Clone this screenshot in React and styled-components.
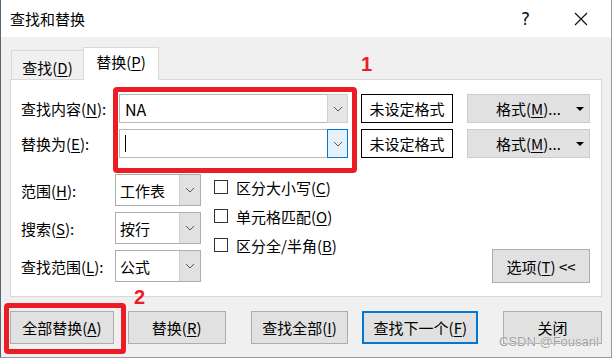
import React from "react";
import styled, { createGlobalStyle } from "styled-components";

const Global = createGlobalStyle`
  html, body { margin: 0; padding: 0; background: #f0f0f0; }
  * { box-sizing: border-box; }
`;

const font = `"Noto Sans CJK SC", "Noto Sans", sans-serif`;

const Chevron = () => (
  <svg width="10" height="6" viewBox="0 0 10 6">
    <path d="M1 1 L5 5 L9 1" fill="none" stroke="#555" strokeWidth="1" />
  </svg>
);

const Key = ({ children }) => <u>{children}</u>;

const App = () => {
  return (
    <Window>
      <Global />
      <TitleBar>
        <span>查找和替换</span>
        <TitleIcons>
          <Help>?</Help>
          <svg width="14" height="14" viewBox="0 0 14 14">
            <path d="M1 1 L13 13 M13 1 L1 13" stroke="#111" strokeWidth="1.2" />
          </svg>
        </TitleIcons>
      </TitleBar>

      <Body>
        <Tabs>
          <Tab>查找(<Key>D</Key>)</Tab>
          <Tab $active>替换(<Key>P</Key>)</Tab>
        </Tabs>

        <Panel>
          <FieldRow>
            <Label>查找内容(<Key>N</Key>):</Label>
            <Combo>
              <ComboText>NA</ComboText>
              <ComboArrow><Chevron /></ComboArrow>
            </Combo>
            <FormatState>未设定格式</FormatState>
            <FormatButton>
              <span>格式(<Key>M</Key>)...</span>
              <Caret />
            </FormatButton>
          </FieldRow>
          <FieldRow>
            <Label>替换为(<Key>E</Key>):</Label>
            <Combo>
              <ComboText><Cursor /></ComboText>
              <ComboArrow $focus><Chevron /></ComboArrow>
            </Combo>
            <FormatState>未设定格式</FormatState>
            <FormatButton>
              <span>格式(<Key>M</Key>)...</span>
              <Caret />
            </FormatButton>
          </FieldRow>

          <Options>
            <SelectCol>
              <SelectRow>
                <OptLabel>范围(<Key>H</Key>):</OptLabel>
                <Select>
                  <SelectText>工作表</SelectText>
                  <SelectArrow><Chevron /></SelectArrow>
                </Select>
              </SelectRow>
              <SelectRow>
                <OptLabel>搜索(<Key>S</Key>):</OptLabel>
                <Select>
                  <SelectText>按行</SelectText>
                  <SelectArrow><Chevron /></SelectArrow>
                </Select>
              </SelectRow>
              <SelectRow>
                <OptLabel>查找范围(<Key>L</Key>):</OptLabel>
                <Select>
                  <SelectText>公式</SelectText>
                  <SelectArrow><Chevron /></SelectArrow>
                </Select>
              </SelectRow>
            </SelectCol>
            <CheckCol>
              <Check><Box /><span>区分大小写(<Key>C</Key>)</span></Check>
              <Check><Box /><span>单元格匹配(<Key>O</Key>)</span></Check>
              <Check><Box /><span>区分全/半角(<Key>B</Key>)</span></Check>
            </CheckCol>
            <OptionsButton>选项(<Key>T</Key>) &lt;&lt;</OptionsButton>
          </Options>
        </Panel>

        <ButtonRow>
          <Button $w={104}>全部替换(<Key>A</Key>)</Button>
          <Button $w={98}>替换(<Key>R</Key>)</Button>
          <Button $w={98} $gap={25}>查找全部(<Key>I</Key>)</Button>
          <Button $w={116} $primary>查找下一个(<Key>F</Key>)</Button>
          <Button $w={99} $gap={25}>关闭</Button>
        </ButtonRow>
      </Body>

      <RedBox $x={112} $y={87} $w={244} $h={86} />
      <RedBox $x={3} $y={303} $w={122} $h={51} />
      <Mark $x={360} $y={53}>1</Mark>
      <Mark $x={133} $y={286}>2</Mark>
      <Watermark>CSDN @Fousaril</Watermark>
    </Window>
  );
};

export default App;

const Window = styled.div`
  position: relative;
  width: 612px;
  height: 358px;
  display: flex;
  flex-direction: column;
  font-family: ${font};
  font-size: 15px;
  color: #000;
  background: #f0f0f0;
  border-left: 1px solid #5b6670;
  border-right: 1px solid #9a9a9a;
  border-bottom: 1px solid #9a9a9a;
  overflow: hidden;
  u { text-decoration-thickness: 1px; text-underline-offset: 2px; }
`;

const TitleBar = styled.div`
  height: 37px;
  background: #fff;
  display: flex;
  align-items: center;
  justify-content: space-between;
  padding-left: 9px;
  padding-right: 23px;
  font-size: 15px;
`;

const TitleIcons = styled.div`
  display: flex;
  align-items: center;
  gap: 44px;
`;

const Help = styled.span`
  font-family: "DejaVu Sans", sans-serif;
  font-size: 17px;
  color: #111;
`;

const Body = styled.div`
  flex: 1;
  padding: 11px 9px 0 9px;
  display: flex;
  flex-direction: column;
`;

const Tabs = styled.div`
  display: flex;
  align-items: flex-end;
  height: 32px;
  padding-left: 1px;
  position: relative;
  z-index: 1;
  margin-bottom: -1px;
`;

const Tab = styled.div`
  height: ${(p) => (p.$active ? "33px" : "30px")};
  width: ${(p) => (p.$active ? "76px" : "73px")};
  padding-top: ${(p) => (p.$active ? "4px" : "7px")};
  border: 1px solid #d9d9d9;
  border-bottom: ${(p) => (p.$active ? "none" : "1px solid #d9d9d9")};
  background: ${(p) => (p.$active ? "#fff" : "#f0f0f0")};
  margin-left: ${(p) => (p.$active ? "-1px" : "0")};
  text-align: center;
  line-height: 20px;
`;

const Panel = styled.div`
  height: 218px;
  background: #fff;
  border: 1px solid #d9d9d9;
  padding: 14px 10px 13px 10px;
  display: flex;
  flex-direction: column;
  gap: 6px;
`;

const FieldRow = styled.div`
  display: flex;
  align-items: center;
  height: 29px;
`;

const Label = styled.div`
  width: 98px;
  flex-shrink: 0;
`;

const Combo = styled.div`
  width: 229px;
  height: 29px;
  border: 1px solid #b8b8b8;
  display: flex;
  background: #fff;
`;

const ComboText = styled.div`
  flex: 1;
  padding-left: 5px;
  display: flex;
  align-items: center;
  font-size: 16px;
`;

const Cursor = styled.span`
  display: inline-block;
  width: 1px;
  height: 17px;
  background: #000;
`;

const ComboArrow = styled.div`
  width: 21px;
  display: flex;
  align-items: center;
  justify-content: center;
  background: ${(p) => (p.$focus ? "#e5f1fb" : "#e6e6e6")};
  border: 1px solid ${(p) => (p.$focus ? "#0078d7" : "#cfcfcf")};
  margin: -1px -1px -1px 0;
`;

const FormatState = styled.div`
  margin-left: 13px;
  width: 92px;
  height: 29px;
  border: 1px solid #000;
  display: flex;
  align-items: center;
  justify-content: center;
`;

const FormatButton = styled.div`
  margin-left: 14px;
  width: 123px;
  height: 29px;
  background: #e1e1e1;
  border: 1px solid #cccccc;
  display: flex;
  align-items: center;
  justify-content: space-between;
  padding: 0 5px 0 28px;
`;

const Caret = styled.span`
  width: 0;
  height: 0;
  border-left: 4px solid transparent;
  border-right: 4px solid transparent;
  border-top: 4px solid #000;
`;

const Options = styled.div`
  flex: 1;
  margin-top: 10px;
  display: flex;
  align-items: stretch;
`;

const SelectCol = styled.div`
  display: flex;
  flex-direction: column;
  gap: 6px;
`;

const SelectRow = styled.div`
  display: flex;
  align-items: center;
`;

const OptLabel = styled.div`
  width: 94px;
`;

const Select = styled.div`
  width: 86px;
  height: 32px;
  border: 1px solid #adadad;
  display: flex;
  background: #fff;
`;

const SelectText = styled.div`
  flex: 1;
  padding-left: 4px;
  display: flex;
  align-items: center;
`;

const SelectArrow = styled.div`
  width: 21px;
  background: #e1e1e1;
  border-left: 1px solid #cfcfcf;
  display: flex;
  align-items: center;
  justify-content: center;
`;

const CheckCol = styled.div`
  margin-left: 13px;
  padding-top: 3px;
  display: flex;
  flex-direction: column;
  gap: 9px;
`;

const Check = styled.div`
  display: flex;
  align-items: center;
  gap: 8px;
  height: 20px;
`;

const Box = styled.span`
  width: 14px;
  height: 14px;
  border: 1px solid #333;
  background: #fff;
`;

const OptionsButton = styled.div`
  margin-left: auto;
  align-self: flex-end;
  width: 98px;
  height: 34px;
  background: #e1e1e1;
  border: 1px solid #adadad;
  display: flex;
  align-items: center;
  justify-content: center;
  margin-right: 1px;
`;

const ButtonRow = styled.div`
  display: flex;
  margin-top: 14px;
  gap: 14px;
`;

const Button = styled.div`
  width: ${(p) => p.$w}px;
  height: 33px;
  margin-left: ${(p) => (p.$gap ? p.$gap - 14 : 0)}px;
  background: #e1e1e1;
  border: ${(p) => (p.$primary ? "2px solid #0078d7" : "1px solid #adadad")};
  display: flex;
  align-items: center;
  justify-content: center;
`;

const RedBox = styled.div`
  position: absolute;
  left: ${(p) => p.$x}px;
  top: ${(p) => p.$y}px;
  width: ${(p) => p.$w}px;
  height: ${(p) => p.$h}px;
  border: 5px solid #ec1c24;
  border-radius: 4px;
  pointer-events: none;
`;

const Mark = styled.div`
  position: absolute;
  left: ${(p) => p.$x}px;
  top: ${(p) => p.$y}px;
  font-family: "Liberation Sans", sans-serif;
  font-weight: bold;
  font-size: 20px;
  color: #ec1c24;
`;

const Watermark = styled.div`
  position: absolute;
  left: 498px;
  top: 334px;
  font-family: "Liberation Sans", sans-serif;
  font-size: 13px;
  color: rgba(140, 140, 140, 0.85);
  text-shadow: 0 0 1px #fff, 0 0 1px #fff;
`;
